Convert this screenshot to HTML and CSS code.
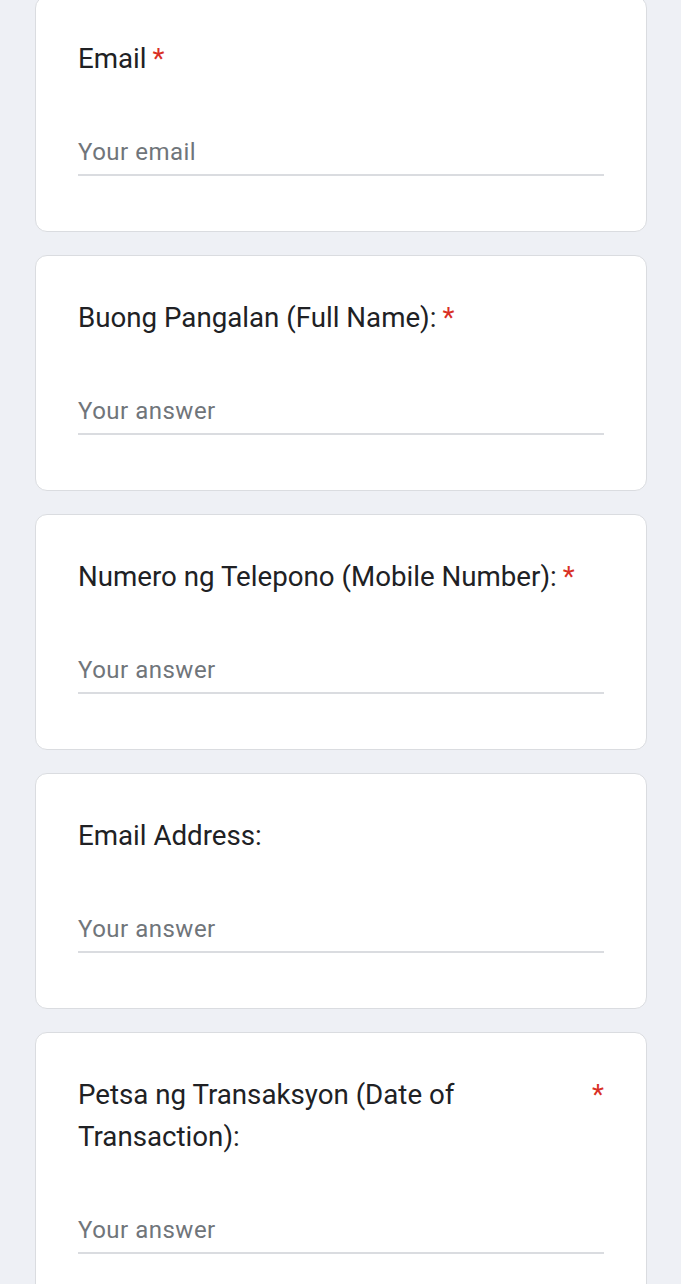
FILE: index.html
```html
<!DOCTYPE html>
<html lang="en">
<head>
    <meta charset="UTF-8">
    <meta name="viewport" content="width=device-width, initial-scale=1.0">
    <title>Form</title>
    <link rel="stylesheet" href="styles.css">
</head>
<body>
    <div class="form">
        <div class="question">
            <div class="title">
                <span class="title-text">Email</span>
                <span class="required">*</span>
            </div>
            <div class="answer">Your email</div>
        </div>

        <div class="question">
            <div class="title">
                <span class="title-text">Buong Pangalan (Full Name):</span>
                <span class="required">*</span>
            </div>
            <div class="answer">Your answer</div>
        </div>

        <div class="question">
            <div class="title">
                <span class="title-text">Numero ng Telepono (Mobile Number):</span>
                <span class="required">*</span>
            </div>
            <div class="answer">Your answer</div>
        </div>

        <div class="question">
            <div class="title">
                <span class="title-text">Email Address:</span>
            </div>
            <div class="answer">Your answer</div>
        </div>

        <div class="question">
            <div class="title">
                <span class="title-text">Petsa ng Transaksyon (Date of Transaction):</span>
                <span class="required">*</span>
            </div>
            <div class="answer">Your answer</div>
        </div>
    </div>
</body>
</html>
```

FILE: styles.css
```css
body {
    margin: 0;
    background-color: #eef0f5;
    font-family: Roboto, "Liberation Sans", sans-serif;
    overflow: hidden;
}
.form {
    display: flex;
    flex-direction: column;
    gap: 23px;
    margin-top: -4px;
    padding: 0 34px 0 35px;
}
.question {
    background-color: #fff;
    border: 1px solid #dadce0;
    border-radius: 12px;
    padding: 41px 42px 55px 42px;
}
.title {
    display: flex;
    gap: 6px;
    font-size: 27.7px;
    line-height: 42px;
    color: #202124;
}
.required {
    color: #d93025;
}
.answer {
    margin-top: 54px;
    font-size: 24px;
    letter-spacing: 0.5px;
    color: #70757a;
    line-height: 36px;
    border-bottom: 2px solid #dadce0;
    padding-bottom: 4px;
}
```
